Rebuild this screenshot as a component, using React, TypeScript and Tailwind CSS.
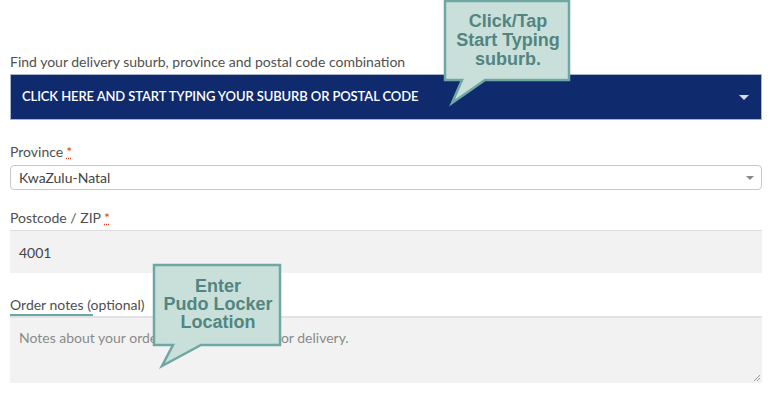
import React from 'react';

function Callout({ left, top, w, h, path, lines, lh, textTop }: {
    left: number; top: number; w: number; h: number; path: string; lines: string[]; lh: number; textTop: number;
}) {
    return (
        <div className="absolute" style={{ left, top, width: w, height: h }}>
            <svg width={w} height={h} className="absolute inset-0">
                <path d={path} fill="#c9e0da" stroke="#6fa7a4" strokeWidth="2.5" strokeLinejoin="miter" />
            </svg>
            <div
                className="absolute left-0 right-0 text-center font-['Liberation_Sans',Arial,sans-serif] font-bold text-[18px] text-[#528581]"
                style={{ top: textTop, lineHeight: `${lh}px` }}
            >
                {lines.map(l => <div key={l}>{l}</div>)}
            </div>
        </div>
    );
}

function Req() {
    return <span className="text-[#e2401c] ml-[3px] underline decoration-dotted">*</span>;
}

export default function App() {
    return (
        <div className="relative w-[768px] h-[399px] overflow-hidden bg-white font-['Lato','Open_Sans',sans-serif]">
            <div className="pl-[10px] pr-[6px] pt-[52px]">
                <div className="text-[14px] leading-[20px] text-[#505050] mb-[2px]">
                    Find your delivery suburb, province and postal code combination
                </div>
                <div className="h-[46px] bg-[#0f2a6d] border border-[#a9b5cf] flex items-center justify-between pl-[11px] pr-[12px]">
                    <span className="text-white font-semibold text-[13px] tracking-[-0.1px] uppercase">
                        Click here and start typing your suburb or postal code
                    </span>
                    <span className="w-0 h-0 border-l-[5px] border-r-[5px] border-t-[5px] border-l-transparent border-r-transparent border-t-[#d8dbe6]" />
                </div>

                <div className="mt-[22px] mb-[3px] text-[14px] leading-[20px] text-[#505050]">
                    Province<Req />
                </div>
                <div className="h-[25px] border border-[#c8c8c8] rounded-[4px] flex items-center justify-between pl-[8px] pr-[7px] text-[14px] text-[#444]">
                    <span>KwaZulu-Natal</span>
                    <span className="w-0 h-0 border-l-[4px] border-r-[4px] border-t-[4px] border-l-transparent border-r-transparent border-t-[#888]" />
                </div>

                <div className="mt-[18px] mb-[2px] text-[14px] leading-[20px] text-[#505050]">
                    Postcode / ZIP<Req />
                </div>
                <div className="h-[43px] bg-[#f2f2f2] border-t border-[#dedede] flex items-center pl-[9px] text-[14px] text-[#444]">
                    4001
                </div>

                <div className="mt-[22px] text-[14px] leading-[20px] text-[#505050]">
                    Order notes (optional)
                </div>
                <div className="relative">
                    <div className="absolute left-0 top-[-1px] w-[83px] h-[3px] bg-[#6aa8a8]" />
                </div>
                <div className="relative h-[67px] mt-[1px] bg-[#f2f2f2] border-t-2 border-[#e2e2e2] pl-[9px] pt-[9px] text-[14px] text-[#8a8a8a]">
                    Notes about your order, e.g. special notes for delivery.
                    <svg width="8" height="8" className="absolute right-[1px] bottom-[1px]">
                        <path d="M7 1 L1 7 M7 4 L4 7" stroke="#999" strokeWidth="1" />
                    </svg>
                </div>
            </div>

            <Callout
                left={440} top={0} w={136} h={108}
                path="M5,1 H129 V80 H45 L12,103 L22,80 H5 Z"
                lines={['Click/Tap', 'Start Typing', 'suburb.']}
                lh={19} textTop={12}
            />
            <Callout
                left={150} top={262} w={136} h={108}
                path="M4,3 H130 V83 H51 L12,104 L23,83 H4 Z"
                lines={['Enter', 'Pudo Locker', 'Location']}
                lh={18} textTop={15}
            />
        </div>
    );
}
